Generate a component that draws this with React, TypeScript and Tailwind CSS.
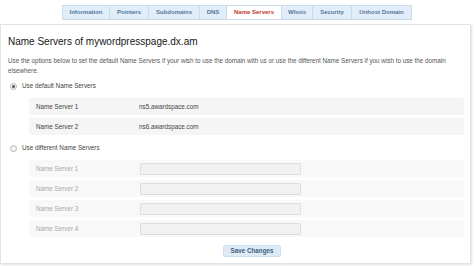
import React from "react";

const tabs = [
  { label: "Information", w: "w-[48px]" },
  { label: "Pointers", w: "w-[39px]" },
  { label: "Subdomains", w: "w-[51px]" },
  { label: "DNS", w: "w-[27px]" },
  { label: "Name Servers", w: "w-[55px]", active: true },
  { label: "Whois", w: "w-[31px]" },
  { label: "Security", w: "w-[39px]" },
  { label: "Unhost Domain", w: "w-[60px]" },
];

function Radio({ checked }: { checked?: boolean }) {
  return (
    <span className="flex h-[7px] w-[7px] items-center justify-center rounded-full border border-[#b5b5b5] bg-[#f4f4f4]">
      {checked && <span className="h-[3px] w-[3px] rounded-full bg-[#555]" />}
    </span>
  );
}

function StaticRow({ label, value }: { label: string; value: string }) {
  return (
    <div className="flex h-[17px] items-center rounded-[2px] bg-[#f5f5f5] pl-[7px] text-[6.3px] text-[#444]">
      <span className="w-[103px]">{label}</span>
      <span>{value}</span>
    </div>
  );
}

function InputRow({ label }: { label: string }) {
  return (
    <div className="flex h-[17px] items-center rounded-[2px] bg-[#f8f8f8] pl-[7px] text-[6.3px] text-[#a8a8a8]">
      <span className="w-[104px]">{label}</span>
      <div className="h-[12px] w-[161px] rounded-[1px] border border-[#dedede] bg-[#f1f1f1]" />
    </div>
  );
}

export default function App() {
  return (
    <div
      className="h-[266px] w-[474px] overflow-hidden bg-white"
      style={{ fontFamily: '"Liberation Sans", Arial, sans-serif' }}
    >
      <div className="flex pl-[62px] pt-[5px]">
        {tabs.map((t) => (
          <div
            key={t.label}
            className={`flex h-[15px] items-center justify-center border border-l-0 first:border-l text-[6px] font-bold ${t.w} ${
              t.active
                ? "border-[#c9dbed] bg-white text-[#c0392b]"
                : "border-[#c9dbed] bg-[#e1edf8] text-[#55779a]"
            }`}
          >
            {t.label}
          </div>
        ))}
      </div>

      <div className="mt-[4px] w-[471px] border border-[#e3e3e3] bg-white px-[7px] pb-[6px] pt-[11px] shadow-[1px_1px_2px_rgba(0,0,0,0.12)]">
        <h1 className="text-[10px] leading-[12px] text-[#161616]">
          Name Servers of mywordpresspage.dx.am
        </h1>
        <p className="mt-[8px] text-[6.3px] leading-[10px] text-[#555]">
          Use the options below to set the default Name Servers if your wish to use the domain with us or use the different Name Servers if you wish to use the domain elsewhere.
        </p>

        <div className="mt-[5px] flex h-[10px] items-center gap-[5px] pl-[2px] text-[6.3px] text-[#444]">
          <Radio checked />
          <span>Use default Name Servers</span>
        </div>
        <div className="ml-[21px] mr-[-1px] mt-[7px] flex flex-col gap-[3px]">
          <StaticRow label="Name Server 1" value="ns5.awardspace.com" />
          <StaticRow label="Name Server 2" value="ns6.awardspace.com" />
        </div>

        <div className="mt-[8px] flex h-[10px] items-center gap-[5px] pl-[2px] text-[6.3px] text-[#444]">
          <Radio />
          <span>Use different Name Servers</span>
        </div>
        <div className="ml-[21px] mr-[-1px] mt-[7px] flex flex-col gap-[3px]">
          <InputRow label="Name Server 1" />
          <InputRow label="Name Server 2" />
          <InputRow label="Name Server 3" />
          <InputRow label="Name Server 4" />
        </div>

        <div className="mt-[8px] flex justify-center pl-[33px]">
          <button className="h-[12px] rounded-[2px] border border-[#cfe0f0] bg-[#deebf7] px-[6px] text-[6.3px] font-bold leading-none text-[#3f5f80]">
            Save Changes
          </button>
        </div>
      </div>
    </div>
  );
}
